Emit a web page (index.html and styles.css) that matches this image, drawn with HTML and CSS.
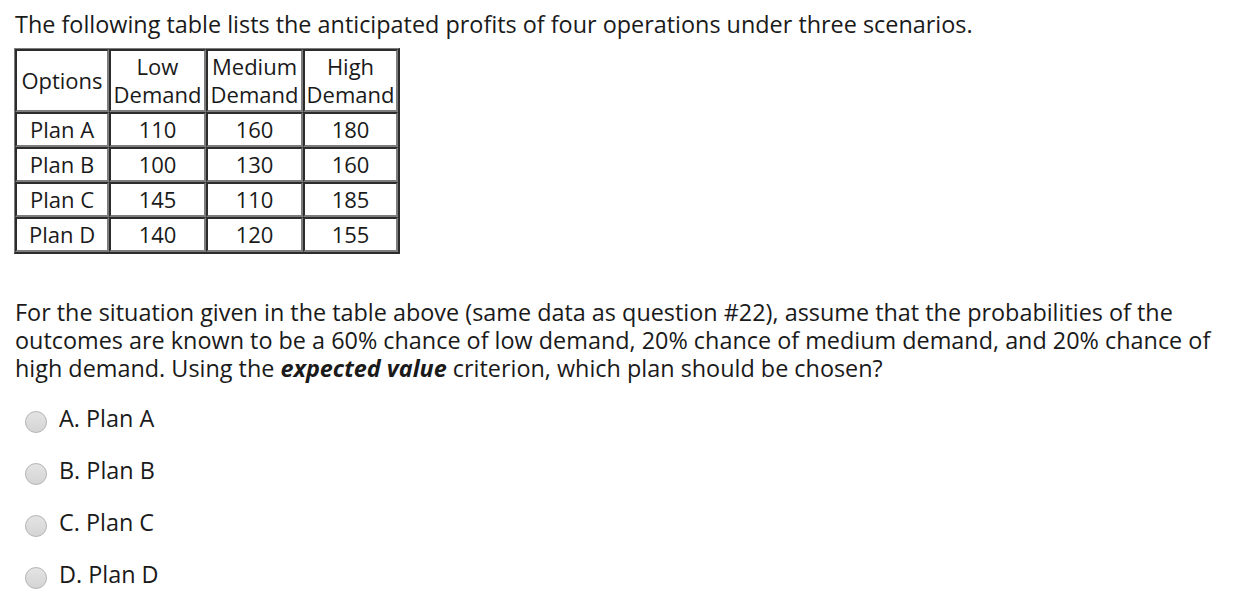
FILE: index.html
```html
<!DOCTYPE html>
<html>
<head>
<meta charset="utf-8">
<link rel="stylesheet" href="styles.css">
</head>
<body>
<div class="page">
  <p class="intro">The following table lists the anticipated profits of four operations under three scenarios.</p>
  <table class="data">
    <tr class="head">
      <td class="c1">Options</td>
      <td class="c2">Low<br>Demand</td>
      <td class="c3">Medium<br>Demand</td>
      <td class="c4">High<br>Demand</td>
    </tr>
    <tr><td>Plan A</td><td>110</td><td>160</td><td>180</td></tr>
    <tr><td>Plan B</td><td>100</td><td>130</td><td>160</td></tr>
    <tr><td>Plan C</td><td>145</td><td>110</td><td>185</td></tr>
    <tr><td>Plan D</td><td>140</td><td>120</td><td>155</td></tr>
  </table>
  <p class="question">For the situation given in the table above (same data as question #22), assume that the probabilities of the outcomes are known to be a 60% chance of low demand, 20% chance of medium demand, and 20% chance of high demand. Using the <b><i>expected value</i></b> criterion, which plan should be chosen?</p>
  <ul class="choices">
    <li class="choice"><span class="radio"></span><span class="label">A. Plan A</span></li>
    <li class="choice"><span class="radio"></span><span class="label">B. Plan B</span></li>
    <li class="choice"><span class="radio"></span><span class="label">C. Plan C</span></li>
    <li class="choice"><span class="radio"></span><span class="label">D. Plan D</span></li>
  </ul>
</div>
</body>
</html>
```
FILE: styles.css
```css
html, body {
  margin: 0;
  padding: 0;
  background: #fff;
}
body {
  font-family: "Open Sans", "Liberation Sans", sans-serif;
  font-size: 23.4px;
  line-height: 28px;
  color: #1a1a1a;
}
.page {
  padding: 10px 15px 0 15px;
}
.intro {
  margin: 0 0 10px 0;
}
.data {
  font-size: 22px;
  border-collapse: separate;
  border-spacing: 0;
  border-style: solid;
  border-width: 1px 2px 2px 1px;
  border-color: #7d7d7d #2c2c2c #2c2c2c #7d7d7d;
  margin-left: -1px;
  table-layout: fixed;
}
.data td {
  border-style: solid;
  border-width: 2px;
  border-color: #2c2c2c #7d7d7d #7d7d7d #2c2c2c;
  text-align: center;
  padding: 0 0 1px 0;
  line-height: 30px;
  box-sizing: border-box;
  height: 35px;
}
.data tr.head td {
  line-height: 28px;
  height: 62px;
  padding: 1px 0 2px 0;
}
.data .c1 { width: 94px; }
.data .c2 { width: 97px; }
.data .c3 { width: 97px; }
.data .c4 { width: 95px; }
.question {
  margin: 44px 0 0 0;
}
.choices {
  list-style: none;
  margin: 10px 0 0 0;
  padding: 0;
}
.choice {
  display: flex;
  align-items: center;
  height: 52px;
}
.radio {
  width: 20px;
  height: 20px;
  border-radius: 50%;
  border: 1px solid #b4b4b4;
  background: linear-gradient(#e4e4e4, #d4d4d4);
  margin: 8px 12px 0 10px;
  flex: none;
}
.label {
  display: block;
}
```
